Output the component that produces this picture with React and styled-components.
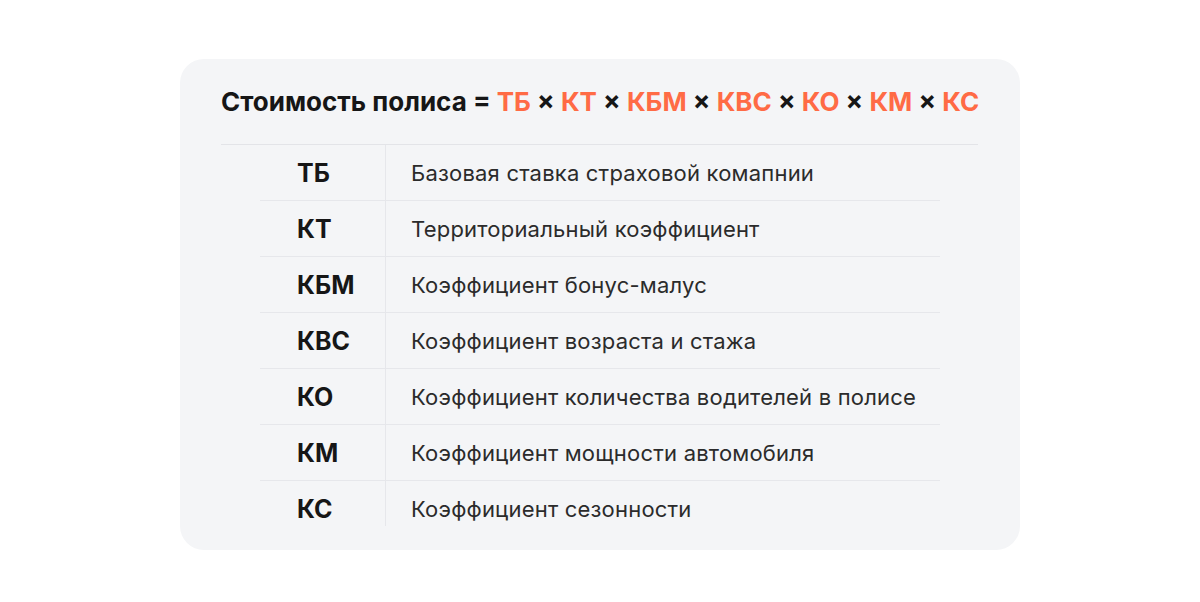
import React from "react";
import styled, { createGlobalStyle } from "styled-components";

const rows = [
  ["ТБ", "Базовая ставка страховой комапнии"],
  ["КТ", "Территориальный коэффициент"],
  ["КБМ", "Коэффициент бонус-малус"],
  ["КВС", "Коэффициент возраста и стажа"],
  ["КО", "Коэффициент количества водителей в полисе"],
  ["КМ", "Коэффициент мощности автомобиля"],
  ["КС", "Коэффициент сезонности"],
];

const factors = ["ТБ", "КТ", "КБМ", "КВС", "КО", "КМ", "КС"];

function App() {
  return (
    <>
      <GlobalStyle />
      <Page>
        <Card>
          <Title>
            Стоимость полиса ={" "}
            {factors.map((f, i) => (
              <React.Fragment key={f}>
                {i > 0 && <Times> × </Times>}
                <Factor>{f}</Factor>
              </React.Fragment>
            ))}
          </Title>
          <Table>
            {rows.map(([key, text], i) => (
              <Row key={key} $last={i === rows.length - 1}>
                <Key $last={i === rows.length - 1}>{key}</Key>
                <Desc>{text}</Desc>
              </Row>
            ))}
          </Table>
        </Card>
      </Page>
    </>
  );
}

const GlobalStyle = createGlobalStyle`
  body {
    margin: 0;
    background: #ffffff;
    font-family: Inter, "Noto Sans", sans-serif;
  }
`;

const Page = styled.div`
  width: 1200px;
  height: 602px;
  display: flex;
  justify-content: center;
  padding-top: 59px;
  box-sizing: border-box;
`;

const Card = styled.div`
  width: 840px;
  height: 491px;
  box-sizing: border-box;
  background: #f4f5f7;
  border-radius: 24px;
  padding: 27px 42px 0 41px;
  display: flex;
  flex-direction: column;
`;

const Title = styled.h1`
  margin: 0;
  font-size: 26px;
  line-height: 32px;
  font-weight: 700;
  color: #161616;
  white-space: nowrap;
  padding-bottom: 26px;
  border-bottom: 1px solid #e3e4e8;
`;

const Factor = styled.span`
  color: #ff6b45;
`;

const Times = styled.span`
  color: #161616;
`;

const Table = styled.div`
  display: flex;
  flex-direction: column;
  margin: 0 38px 0 39px;
`;

const Row = styled.div`
  display: grid;
  grid-template-columns: 126px 1fr;
  height: 56px;
  border-bottom: ${(p) => (p.$last ? "none" : "1px solid #e6e7eb")};
  box-sizing: border-box;
`;

const Key = styled.div`
  position: relative;
  display: flex;
  align-items: center;
  padding-left: 37px;
  font-size: 25px;
  font-weight: 700;
  color: #161616;

  &::after {
    content: "";
    position: absolute;
    right: 0;
    top: 0;
    bottom: ${(p) => (p.$last ? "11px" : "-1px")};
    width: 1px;
    background: #e6e7eb;
  }
`;

const Desc = styled.div`
  display: flex;
  align-items: center;
  padding-left: 25px;
  font-size: 22px;
  letter-spacing: 0.2px;
  color: #2b2b2b;
`;

export default App;
